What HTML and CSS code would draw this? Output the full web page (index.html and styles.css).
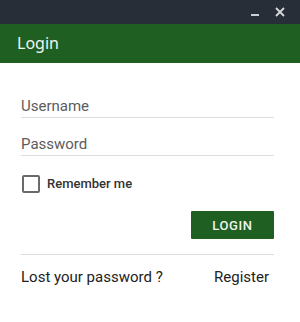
FILE: index.html
```html
<!DOCTYPE html>
<html>
<head>
<meta charset="utf-8">
<link rel="stylesheet" href="styles.css">
</head>
<body>
<div class="window">
  <div class="titlebar">
    <svg class="ico min" width="8" height="2" viewBox="0 0 8 2"><rect x="0" y="0" width="8" height="2" fill="#c9ced3"/></svg>
    <svg class="ico close" width="10" height="10" viewBox="0 0 10 10"><path d="M1 1 L9 9 M9 1 L1 9" stroke="#d6dadd" stroke-width="1.8" fill="none"/></svg>
  </div>
  <div class="header">Login</div>
  <div class="form">
    <div class="field">Username</div>
    <div class="field second">Password</div>
    <label class="check"><span class="box"></span><span class="check-label">Remember me</span></label>
    <div class="actions"><button class="btn">LOGIN</button></div>
    <div class="links"><span>Lost your password ?</span><span>Register</span></div>
  </div>
</div>
</body>
</html>
```
FILE: styles.css
```css
html, body { margin: 0; padding: 0; background: #fff; }
body { width: 300px; height: 322px; font-family: Roboto, "Liberation Sans", sans-serif; overflow: hidden; }
.titlebar { height: 24px; background: #272e37; display: flex; align-items: flex-start; justify-content: flex-end; }
.ico { display: block; }
.ico.min { margin-top: 14px; margin-right: 16px; }
.ico.close { margin-top: 7px; margin-right: 15px; }
.header { height: 39px; background: #1f5f22; color: #f2f6f2; font-size: 16px; line-height: 39px; padding-left: 17px; font-family: "Noto Sans", Roboto, sans-serif; }
.form { padding: 33px 26px 0 21px; }
.field { font-size: 15px; line-height: 20px; color: #5c5c5c; padding-bottom: 1px; border-bottom: 1px solid #dedede; }
.field.second { margin-top: 16px; }
.check { display: flex; align-items: center; margin-top: 19px; margin-left: 1px; }
.box { width: 14px; height: 14px; border: 2px solid #6a6a6a; border-radius: 2px; }
.check-label { margin-left: 7px; font-size: 13px; font-weight: 500; color: #333; line-height: 18px; }
.actions { display: flex; justify-content: flex-end; margin-top: 18px; padding-bottom: 15px; border-bottom: 1px solid #dcdcdc; }
.btn { width: 83px; height: 28px; background: #1f5f22; color: #eef4ee; border: none; border-radius: 1px; font-family: Roboto, sans-serif; font-size: 13px; font-weight: 500; letter-spacing: 0.6px; padding: 0; }
.links { display: flex; justify-content: space-between; margin-top: 12px; padding-right: 5px; font-size: 15px; line-height: 20px; color: #222; }
```
